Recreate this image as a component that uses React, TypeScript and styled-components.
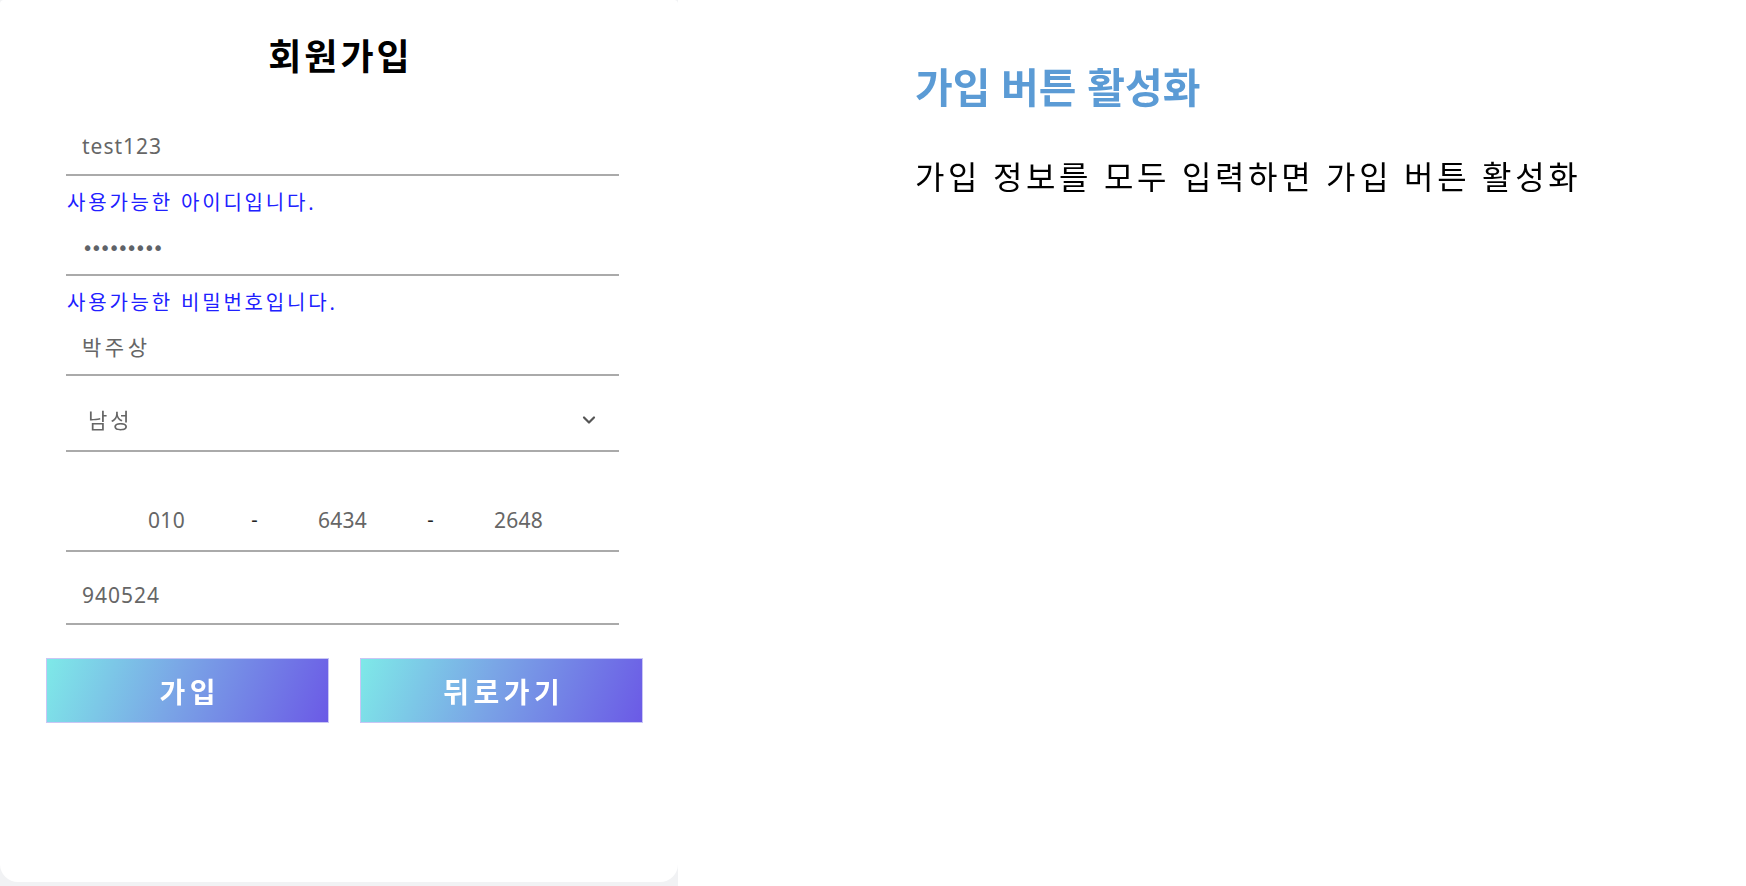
import styled, { createGlobalStyle } from "styled-components";

const GlobalStyle = createGlobalStyle`
    html, body {
        margin: 0;
        padding: 0;
        background: #ffffff;
        font-family: "Noto Sans", "Noto Sans CJK KR", sans-serif;
    }
    * {
        box-sizing: border-box;
    }
`;

const Page = styled.div`
    display: flex;
    width: 100%;
    height: 886px;
    overflow: hidden;
`;

const LeftPane = styled.div`
    flex-shrink: 0;
    width: 678px;
    height: 886px;
    background: #f1f2f4;
`;

const Card = styled.div`
    height: 882px;
    background: #ffffff;
    border-radius: 4px 4px 18px 18px;
    padding-top: 33px;
`;

const Title = styled.h1`
    margin: 0 0 37px;
    height: 48px;
    line-height: 48px;
    padding-left: 3px;
    text-align: center;
    font-size: 36px;
    font-weight: 700;
    letter-spacing: 3px;
    color: #000;
`;

const Form = styled.div`
    display: flex;
    flex-direction: column;
    padding: 0 59px 0 66px;
`;

const TextInput = styled.input<{ $gap?: number; $spacing?: number }>`
    display: block;
    width: 100%;
    height: 58px;
    margin-top: ${(p) => p.$gap ?? 0}px;
    padding: 0 16px;
    border: none;
    border-bottom: 2px solid #aaaaaa;
    outline: none;
    background: transparent;
    font-family: inherit;
    font-size: 21px;
    letter-spacing: ${(p) => p.$spacing ?? 1}px;
    color: #666666;
    caret-color: #333;
`;

const PasswordInput = styled(TextInput)`
    padding-top: 4px;
    font-family: "DejaVu Sans", sans-serif;
    font-size: 19px;
    letter-spacing: -2.4px;
    color: #5f6368;
`;

const Message = styled.div`
    height: 42px;
    padding: 15px 0 0 1px;
    font-size: 20px;
    line-height: 24px;
    letter-spacing: 2.8px;
    color: #2020ff;
`;

const SelectWrap = styled.div`
    position: relative;
    margin-top: 14px;
`;

const Select = styled.select`
    display: block;
    width: 100%;
    height: 62px;
    padding: 0 40px 0 22px;
    border: none;
    border-bottom: 2px solid #aaaaaa;
    outline: none;
    background: transparent;
    appearance: none;
    font-family: inherit;
    font-size: 21px;
    letter-spacing: 3px;
    color: #666666;
`;

const Chevron = styled.svg`
    position: absolute;
    right: 23px;
    top: 25px;
    pointer-events: none;
`;

const PhoneRow = styled.div`
    display: flex;
    justify-content: center;
    align-items: center;
    height: 58px;
    margin-top: 42px;
    padding-bottom: 5px;
    border-bottom: 2px solid #aaaaaa;
`;

const PhonePart = styled.input`
    width: 130px;
    height: 100%;
    border: none;
    outline: none;
    background: transparent;
    text-align: center;
    font-family: inherit;
    font-size: 21px;
    letter-spacing: 0.3px;
    color: #666666;
`;

const Dash = styled.span`
    width: 46px;
    text-align: center;
    font-size: 20px;
    color: #222;
`;

const ButtonRow = styled.div`
    display: flex;
    gap: 31px;
    margin: 33px 35px 0 46px;
`;

const GradientButton = styled.button`
    flex: 1;
    height: 65px;
    padding: 0 0 0 4.5px;
    border: 1px solid #c9c6f5;
    background: linear-gradient(110deg, #7ee9e8 0%, #7aa6e6 45%, #6b5ae6 100%);
    color: #ffffff;
    font-family: inherit;
    font-size: 28px;
    font-weight: 700;
    letter-spacing: 4.5px;
    cursor: pointer;
`;

const RightPane = styled.div`
    flex: 1;
    padding: 62px 0 0 237px;
`;

const Heading = styled.h2`
    margin: 0;
    line-height: 50px;
    font-size: 41px;
    font-weight: 700;
    color: #5b9bd5;
`;

const Description = styled.p`
    margin: 44px 0 0;
    line-height: 42px;
    font-size: 32px;
    font-weight: 400;
    letter-spacing: 3.6px;
    color: #000;
`;

export default function App() {
    return (
        <>
            <GlobalStyle />
            <Page>
                <LeftPane>
                    <Card>
                        <Title>회원가입</Title>
                        <Form>
                            <TextInput defaultValue="test123" />
                            <Message>사용가능한 아이디입니다.</Message>
                            <PasswordInput type="password" defaultValue="abcd12345" />
                            <Message>사용가능한 비밀번호입니다.</Message>
                            <TextInput defaultValue="박주상" $spacing={3.5} />
                            <SelectWrap>
                                <Select defaultValue="male">
                                    <option value="male">남성</option>
                                    <option value="female">여성</option>
                                </Select>
                                <Chevron width="14" height="10" viewBox="0 0 14 10">
                                    <path d="M2 2.5 L7 7.5 L12 2.5" fill="none" stroke="#555" strokeWidth="2.2" strokeLinecap="round" strokeLinejoin="round" />
                                </Chevron>
                            </SelectWrap>
                            <PhoneRow>
                                <PhonePart defaultValue="010" />
                                <Dash>-</Dash>
                                <PhonePart defaultValue="6434" />
                                <Dash>-</Dash>
                                <PhonePart defaultValue="2648" />
                            </PhoneRow>
                            <TextInput $gap={15} defaultValue="940524" autoFocus />
                        </Form>
                        <ButtonRow>
                            <GradientButton>가입</GradientButton>
                            <GradientButton>뒤로가기</GradientButton>
                        </ButtonRow>
                    </Card>
                </LeftPane>
                <RightPane>
                    <Heading>가입 버튼 활성화</Heading>
                    <Description>가입 정보를 모두 입력하면 가입 버튼 활성화</Description>
                </RightPane>
            </Page>
        </>
    );
}
